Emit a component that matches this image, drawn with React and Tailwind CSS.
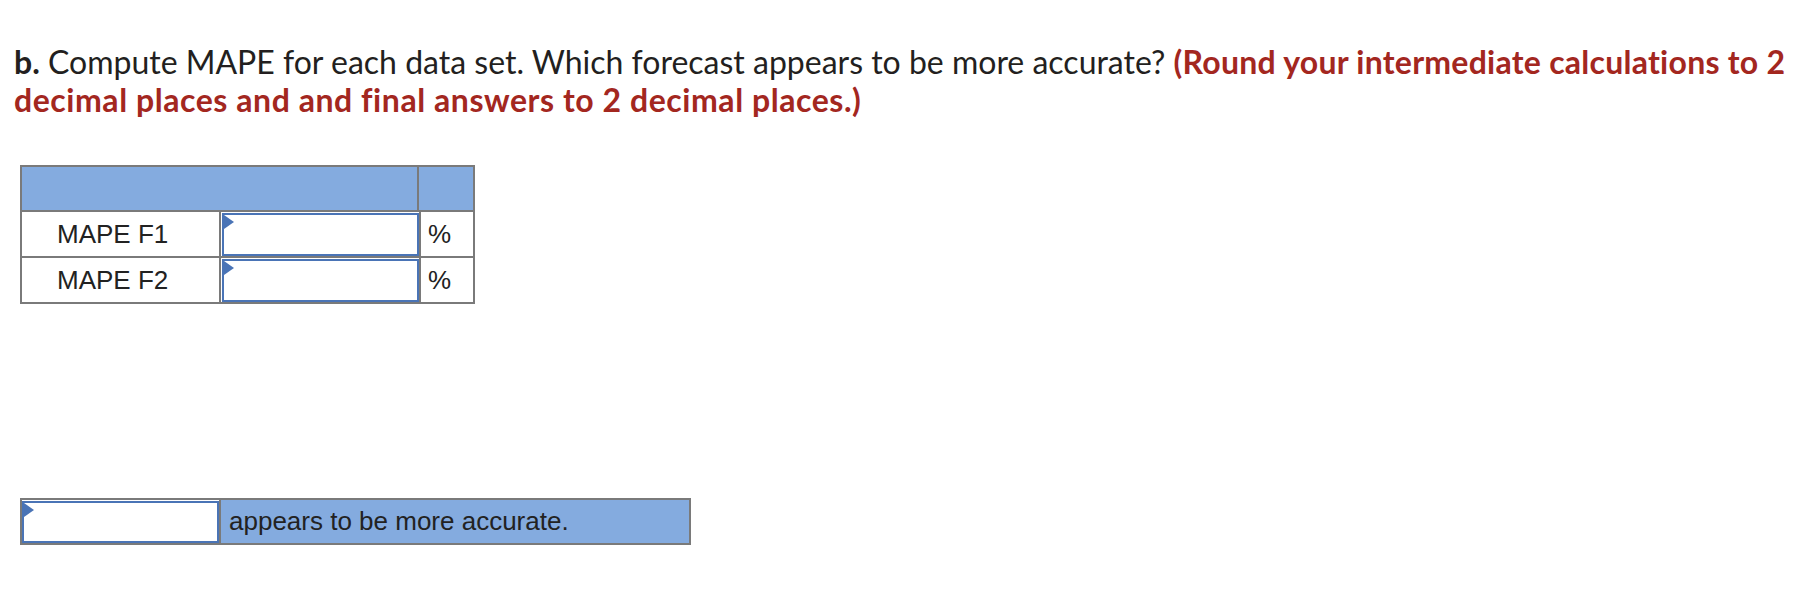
import React from "react";

function Flag() {
  return (
    <svg className="absolute left-0 top-0" width="10" height="14" viewBox="0 0 10 14">
      <polygon points="0,0 10,7 0,14" fill="#4a74b6" />
    </svg>
  );
}

function InputBox({ w }) {
  return (
    <div className={`relative h-full border-2 border-[#4a74b6] bg-white ${w}`}>
      <Flag />
    </div>
  );
}

export default function App() {
  return (
    <div className="w-[1806px] h-[594px] bg-white">
      <div
        className="pt-[43px] pl-[14px] text-[32px] leading-[38px] text-[#231f20] whitespace-nowrap"
        style={{ fontFamily: "Lato, 'Open Sans', sans-serif" }}
      >
        <div>
          <span className="font-bold">b.</span> Compute MAPE for each data set. Which forecast appears to be more accurate?{" "}
          <span className="font-bold text-[#a3271f] tracking-[0.25px]">(Round your intermediate calculations to 2</span>
        </div>
        <div className="font-bold text-[#a3271f] tracking-[0.55px]">decimal places and and final answers to 2 decimal places.)</div>
      </div>

      <div
        className="ml-[20px] mt-[46px] w-[455px] border-2 border-[#7a7a7a] text-[26px] text-[#222]"
        style={{ fontFamily: "'Liberation Sans', Arial, sans-serif" }}
      >
        <div className="flex h-[43px] bg-[#84abdf]">
          <div className="w-[397px] border-r-2 border-[#7a7a7a]" />
          <div className="flex-1" />
        </div>
        {["MAPE F1", "MAPE F2"].map((label) => (
          <div key={label} className="flex h-[46px] border-t-2 border-[#7a7a7a]">
            <div className="flex w-[199px] items-center border-r-2 border-[#7a7a7a] pl-[35px]">{label}</div>
            <div className="w-[200px] border-r-2 border-[#7a7a7a] pt-px pl-px">
              <InputBox w="w-[197px]" />
            </div>
            <div className="flex flex-1 items-center pl-[7px]">%</div>
          </div>
        ))}
      </div>

      <div
        className="ml-[20px] mt-[194px] flex h-[47px] w-[671px] border-2 border-[#7a7a7a] text-[26px] text-[#222]"
        style={{ fontFamily: "'Liberation Sans', Arial, sans-serif" }}
      >
        <div className="w-[199px] border-r-2 border-[#7a7a7a] pt-px">
          <InputBox w="w-[197px]" />
        </div>
        <div className="flex flex-1 items-center bg-[#84abdf] pl-[8px]">appears to be more accurate.</div>
      </div>
    </div>
  );
}
